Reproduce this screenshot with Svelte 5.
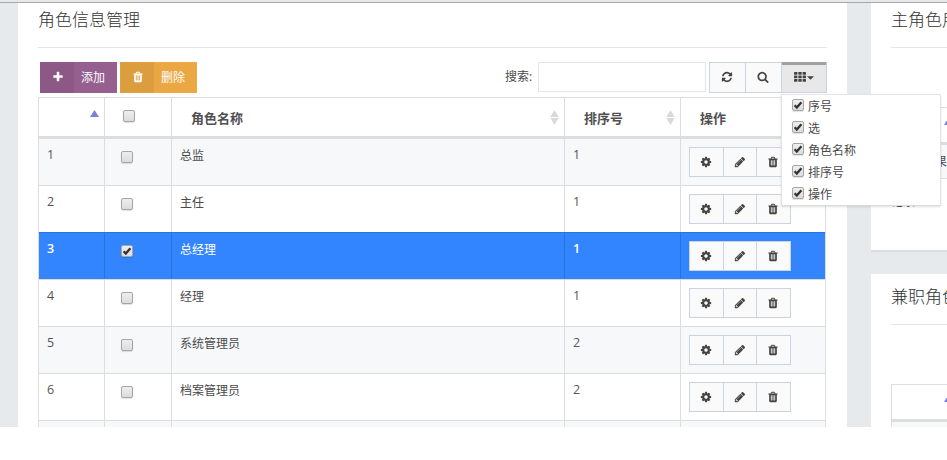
<script>
  const rows = [
    { no: 1, name: '总监', sort: 1 },
    { no: 2, name: '主任', sort: 1 },
    { no: 3, name: '总经理', sort: 1, selected: true },
    { no: 4, name: '经理', sort: 1 },
    { no: 5, name: '系统管理员', sort: 2 },
    { no: 6, name: '档案管理员', sort: 2 },
  ];
  const columns = ['序号', '选', '角色名称', '排序号', '操作'];
  const icons = {
    plus: 'M1600 736v192q0 40-28 68t-68 28h-416v416q0 40-28 68t-68 28h-192q-40 0-68-28t-28-68v-416h-416q-40 0-68-28t-28-68v-192q0-40 28-68t68-28h416v-416q0-40 28-68t68-28h192q40 0 68 28t28 68v416h416q40 0 68 28t28 68z',
    trash: 'M704 1376v-704q0-14-9-23t-23-9h-64q-14 0-23 9t-9 23v704q0 14 9 23t23 9h64q14 0 23-9t9-23zm256 0v-704q0-14-9-23t-23-9h-64q-14 0-23 9t-9 23v704q0 14 9 23t23 9h64q14 0 23-9t9-23zm256 0v-704q0-14-9-23t-23-9h-64q-14 0-23 9t-9 23v704q0 14 9 23t23 9h64q14 0 23-9t9-23zm-544-992h448l-48-117q-7-9-17-11h-317q-10 2-17 11zm928 32v64q0 14-9 23t-23 9h-96v948q0 83-47 143.5t-113 60.5h-832q-66 0-113-58.5t-47-141.5v-952h-96q-14 0-23-9t-9-23v-64q0-14 9-23t23-9h309l70-167q15-37 54-63t79-26h320q40 0 79 26t54 63l70 167h309q14 0 23 9t9 23z',
    cog: 'M1152 896q0-106-75-181t-181-75-181 75-75 181 75 181 181 75 181-75 75-181zm512-109v222q0 12-8 23t-20 13l-185 28q-19 54-39 91 35 50 107 138 10 12 10 25t-9 23q-27 37-99 108t-94 71q-12 0-26-9l-138-108q-44 23-91 38-16 136-29 186-7 28-36 28h-222q-14 0-24.5-8.5t-11.5-21.5l-28-184q-49-16-90-37l-141 107q-10 9-25 9-14 0-25-11-126-114-165-168-7-10-7-23 0-12 8-23 15-21 51-66.5t54-70.5q-27-50-41-99l-183-27q-13-2-21-12.5t-8-23.5v-222q0-12 8-23t19-13l186-28q14-46 39-92-40-57-107-138-10-12-10-24 0-10 9-23 26-36 98.5-107.5t94.5-71.5q13 0 26 10l138 107q44-23 91-38 16-136 29-186 7-28 36-28h222q14 0 24.5 8.5t11.5 21.5l28 184q49 16 90 37l142-107q9-9 24-9 13 0 25 10 129 119 165 170 7 8 7 22 0 12-8 23-15 21-51 66.5t-54 70.5q26 50 41 98l183 28q13 2 21 12.5t8 23.5z',
    pencil: 'M491 1536l91-91-235-235-91 91v107h128v128h107zm523-928q0-22-22-22-10 0-17 7l-542 542q-7 7-7 17 0 22 22 22 10 0 17-7l542-542q7-7 7-17zm-54-192l416 416-832 832h-416v-416zm683 96q0 53-37 90l-166 166-416-416 166-165q36-38 90-38 53 0 91 38l235 234q37 39 37 91z',
    refresh: 'M1639 1056q0 5-1 7-64 268-268 434.5t-478 166.5q-146 0-282.5-55t-243.5-157l-129 129q-19 19-45 19t-45-19-19-45v-448q0-26 19-45t45-19h448q26 0 45 19t19 45-19 45l-137 137q71 66 161 102t187 36q134 0 250-65t186-179q11-17 53-117 8-23 30-23h192q13 0 22.5 9.5t9.5 22.5zm25-800v448q0 26-19 45t-45 19h-448q-26 0-45-19t-19-45 19-45l138-138q-148-137-349-137-134 0-250 65t-186 179q-11 17-53 117-8 23-30 23h-199q-13 0-22.5-9.5t-9.5-22.5v-7q65-268 270-434.5t480-166.5q146 0 284 55.5t245 156.5l130-129q19-19 45-19t45 19 19 45z',
    search: 'M1216 832q0-185-131.5-316.5t-316.5-131.5-316.5 131.5-131.5 316.5 131.5 316.5 316.5 131.5 316.5-131.5 131.5-316.5zm512 832q0 52-38 90t-90 38q-54 0-90-38l-343-342q-179 124-399 124-143 0-273.5-55.5t-225-150-150-225-55.5-273.5 55.5-273.5 150-225 225-150 273.5-55.5 273.5 55.5 225 150 150 225 55.5 273.5q0 220-124 399l343 343q37 37 37 90z',
  };
</script>

{#snippet icon(name)}
  <svg class="icon" viewBox="0 0 1792 1792"><path d={icons[name]} /></svg>
{/snippet}

{#snippet check(on)}
  <span class="check">
    {#if on}
      <svg viewBox="0 0 12 12"><path d="M2.6 6.3 L4.8 8.5 L9.4 3.2" /></svg>
    {/if}
  </span>
{/snippet}

{#snippet sorter()}
  <svg class="sorter" viewBox="0 0 9 15"><path d="M4.5 0L8.7 7H.3zM.3 8h8.4L4.5 15z" /></svg>
{/snippet}

<div class="topline"></div>
<div class="page">
  <section class="card main">
    <h2>角色信息管理</h2>
    <div class="toolbar">
      <button class="action add"><i>{@render icon('plus')}</i><span>添加</span></button>
      <button class="action del"><i>{@render icon('trash')}</i><span>删除</span></button>
      <label for="q">搜索:</label>
      <input id="q" type="text" />
      <div class="tools">
        <button class="refresh">{@render icon('refresh')}</button>
        <button class="find">{@render icon('search')}</button>
        <button class="cols">
          <svg class="grid" viewBox="0 0 12 10">
            {#each [0, 1, 2] as r}
              {#each [0, 1, 2] as c}
                <rect x={c * 4.3} y={r * 3.5} width="3.4" height="2.7" rx="0.4" />
              {/each}
            {/each}
          </svg>
          <svg class="caret" viewBox="0 0 8 4"><path d="M0 0h8L4 4z" /></svg>
        </button>
        <div class="menu">
          {#each columns as c}
            <div class="item">{@render check(true)}<span>{c}</span></div>
          {/each}
        </div>
      </div>
    </div>

    <div class="table">
      <div class="row head">
        <div class="cell"><svg class="up" viewBox="0 0 9 7"><path d="M4.5 0L9 7H0z" /></svg></div>
        <div class="cell">{@render check(false)}</div>
        <div class="cell">角色名称{@render sorter()}</div>
        <div class="cell">排序号{@render sorter()}</div>
        <div class="cell">操作</div>
      </div>
      {#each rows as r, i}
        <div class="row" class:odd={i % 2 === 0} class:selected={r.selected}>
          <div class="cell num">{r.no}</div>
          <div class="cell pick">{@render check(r.selected)}</div>
          <div class="cell">{r.name}</div>
          <div class="cell num">{r.sort}</div>
          <div class="cell ops">
            <div class="group">
              <button>{@render icon('cog')}</button>
              <button>{@render icon('pencil')}</button>
              <button>{@render icon('trash')}</button>
            </div>
          </div>
        </div>
      {/each}
      <div class="row odd">
        {#each columns as _}<div class="cell"></div>{/each}
      </div>
    </div>
  </section>

  <div class="side">
    <section class="card first">
      <h2>主角色用户</h2>
      <div class="mini">
        <div class="mhead"><svg class="up" viewBox="0 0 9 7"><path d="M4.5 0L9 7H0z" /></svg></div>
        <div class="mrow">没有结果</div>
      </div>
      <p>记录</p>
    </section>
    <section class="card second">
      <h2>兼职角色用户</h2>
      <div class="mini">
        <div class="mhead"><svg class="up" viewBox="0 0 9 7"><path d="M4.5 0L9 7H0z" /></svg></div>
        <div class="mrow"></div>
      </div>
    </section>
  </div>
</div>

<style>
  :global(body) { margin: 0; background: #fff; overflow: hidden; }
  .topline, .page, .page * { box-sizing: border-box; }
  .topline { height: 3px; background: #e8e8e8; border-bottom: 1px solid #a8a8a8; }
  .page {
    display: flex; width: 947px; height: 424px; padding-left: 18px; gap: 24px;
    overflow: hidden; background: #e6eaed; color: #4a4a4a;
    font: 12px/18px "Open Sans", "Noto Sans CJK SC", sans-serif;
  }
  button { font: inherit; padding: 0; margin: 0; border: 0; border-radius: 0; color: inherit; }
  .icon { width: 12px; height: 12px; fill: #444; display: block; }
  .card { background: #fff; padding: 0 20px; }
  .main { width: 829px; height: 424px; flex: none; }
  h2 {
    margin: 0; height: 45px; padding-top: 4px; border-bottom: 1px solid #e3e5e5;
    font-size: 17px; line-height: 26px; font-weight: 300; color: #333; white-space: nowrap;
  }
  .toolbar { display: flex; align-items: flex-start; height: 49px; padding: 14px 0 0 2px; }
  .action { display: flex; width: 77px; height: 31px; margin-right: 3px; color: #fff; }
  .action i { display: flex; align-items: center; justify-content: center; width: 34px; padding: 0 0 2px 2px; height: 31px; background: rgba(0, 0, 0, .06); }
  .action span { padding-left: 7px; line-height: 31px; }
  .action .icon { fill: #fff; }
  .add { background: #955f8f; box-shadow: inset 0 0 0 1px #985f90; }
  .del { background: #eaa742; box-shadow: inset 0 0 0 1px #ecaa44; }
  label { margin-left: auto; line-height: 29px; width: 33px; white-space: nowrap; }
  input { width: 168px; height: 30px; border: 1px solid #e3e5e7; background: #fff; margin: 0 3px 0 0; padding: 0; }
  .tools { position: relative; display: flex; width: 118px; height: 31px; }
  .tools button { display: flex; align-items: center; justify-content: center; border: 1px solid #cad4e1; background: #fafafa; height: 31px; padding: 0 1px 1px 0; }
  .tools .refresh { width: 37px; }
  .tools .find { width: 37px; margin-left: -1px; padding-right: 2px; }
  .tools .cols { width: 46px; margin-left: -1px; background: #e8e8e8; box-shadow: inset 0 2px 0 #a0a0a0; gap: 1px; border-top-color: #a0a4aa; }
  .grid { width: 12px; height: 10px; fill: #444; }
  .caret { width: 7px; height: 4px; fill: #444; margin-top: 2px; }
  .menu {
    position: absolute; z-index: 2; left: 72px; top: 32px; width: 160px; height: 112px;
    padding-top: 1px; background: #fff; border: 1px solid #e2e4e5; border-bottom-color: #d9dcde;
    box-shadow: 0 1px 2px rgba(0, 0, 0, .12);
  }
  .item { display: flex; height: 22px; padding: 3px 0 0 10px; gap: 4px; line-height: 15px; }
  .check {
    display: block; flex: none; width: 12px; height: 12px; border: 1px solid #a5a5a5; border-radius: 2px;
    background: linear-gradient(#eee, #dcdcdc); box-shadow: 0 1px 1px rgba(0, 0, 0, .12);
  }
  .check svg { display: block; width: 12px; height: 12px; margin: -1px; fill: none; stroke: #333; stroke-width: 2.3; }
  .table { border: solid #ddd; border-width: 1px 1px 0 1px; width: 788px; }
  .row { display: grid; grid-template-columns: 66px 67px 393px 116px 144px; height: 47px; border-top: 1px solid #ddd; }
  .cell { border-right: 1px solid #ddd; padding: 8px 0 0 8px; line-height: 18px; }
  .cell:last-child { border-right: 0; }
  .num { font-size: 12.5px; padding-top: 7px; color: #555; }
  .odd { background: #f7f8fa; }
  .pick { padding: 12px 0 0 16px; }
  .head { height: 40px; border-top: 0; border-bottom: 2px solid #ddd; font-weight: 700; font-size: 13px; color: #514f52; }
  .head .cell { display: flex; align-items: flex-start; padding: 12px 5px 0 19px; line-height: 16px; }
  .head .cell:first-child { justify-content: flex-end; }
  .head .cell:nth-child(2) { padding-left: 18px; }
  .up { display: block; width: 9px; height: 7px; fill: #7a80dc; }
  .sorter { width: 9px; height: 15px; fill: #d9d9d9; margin-left: auto; }
  .selected { background: #3385ff; border-color: #2c72dc; color: #fff; }
  .selected .cell { border-color: #2c72dc; }
  .selected .num { color: #fff; font-weight: 600; }
  .group { display: flex; width: 102px; height: 30px; border: 1px solid #cad4e1; background: #fafafa; }
  .group button { display: flex; align-items: center; justify-content: center; width: 34px; background: none; border-right: 1px solid #cad4e1; padding-right: 1px; }
  .group button:nth-child(2) { width: 33px; padding-right: 0; }
  .group button:last-child { width: 33px; border: 0; }
  .side { width: 76px; flex: none; overflow: hidden; }
  .side .card { width: 300px; }
  .first { height: 249px; border-bottom: 2px solid #d9dee1; margin-bottom: 22px; }
  .second { height: 153px; }
  .second h2 { height: 51px; padding-top: 10px; }
  .mini { border: 1px solid #ddd; width: 260px; margin-top: 59px; }
  .mhead { height: 37px; border-bottom: 3px solid #ddd; padding: 10px 0 0 52px; }
  .mrow { height: 33px; padding: 8px 0 0 7px; background: #f7f8fa; }
  p { margin: 14px 0 0; }
</style>
